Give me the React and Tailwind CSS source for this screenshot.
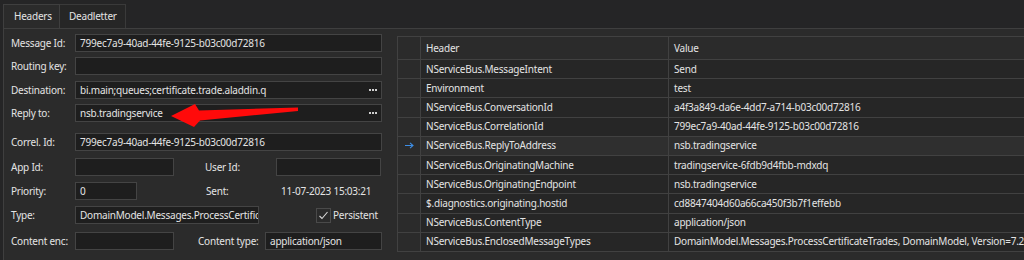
import React from "react";

const headers = [
  ["NServiceBus.MessageIntent", "Send"],
  ["Environment", "test"],
  ["NServiceBus.ConversationId", "a4f3a849-da6e-4dd7-a714-b03c00d72816"],
  ["NServiceBus.CorrelationId", "799ec7a9-40ad-44fe-9125-b03c00d72816"],
  ["NServiceBus.ReplyToAddress", "nsb.tradingservice"],
  ["NServiceBus.OriginatingMachine", "tradingservice-6fdb9d4fbb-mdxdq"],
  ["NServiceBus.OriginatingEndpoint", "nsb.tradingservice"],
  ["$.diagnostics.originating.hostid", "cd8847404d60a66ca450f3b7f1effebb"],
  ["NServiceBus.ContentType", "application/json"],
  [
    "NServiceBus.EnclosedMessageTypes",
    "DomainModel.Messages.ProcessCertificateTrades, DomainModel, Version=7.2.0.0, Culture=neutral, PublicKeyToken=null",
  ],
];

function Field({ value, className = "", dots }) {
  return (
    <div
      className={`relative flex items-center h-[18px] shrink-0 bg-[#1e1e1e] border border-[#444444] pl-[4px] overflow-hidden whitespace-nowrap ${className}`}
    >
      <span>{value}</span>
      {dots && (
        <span className="absolute right-[4px] top-[1px] flex gap-[1px] items-center h-[14px] bg-[#1e1e1e] pl-[2px]">
          <span className="w-[2px] h-[2px] bg-[#cfcfcf]"></span>
          <span className="w-[2px] h-[2px] bg-[#cfcfcf]"></span>
          <span className="w-[2px] h-[2px] bg-[#cfcfcf]"></span>
        </span>
      )}
    </div>
  );
}

function Label({ children, className = "w-[64px]" }) {
  return <div className={`shrink-0 whitespace-nowrap ${className}`}>{children}</div>;
}

export default function App() {
  return (
    <div
      className="relative w-[1024px] h-[260px] overflow-hidden bg-[#252526] text-[#e4e4e4] text-[10px] tracking-[-0.22px]"
      style={{ fontFamily: '"Noto Sans", "Open Sans", sans-serif' }}
    >
      {/* tabs */}
      <div className="flex items-end h-[28px] pl-[3px]">
        <div className="flex items-center h-[24px] w-[57px] pl-[10px] bg-[#2b2b2b] border border-b-0 border-[#3f3f3f]">
          Headers
        </div>
        <div className="flex items-center h-[24px] w-[66px] pl-[9px] bg-[#262626] border border-l-0 border-b-0 border-[#3a3a3a]">
          Deadletter
        </div>
      </div>

      {/* panel */}
      <div className="flex ml-[3px] h-[232px] bg-[#2b2b2b] border-l border-t border-[#3f3f3f]">
        {/* form */}
        <div className="flex flex-col w-[393px] shrink-0 pl-[7px] pt-[5px]">
          <div className="flex items-center">
            <Label>Message Id:</Label>
            <Field value="799ec7a9-40ad-44fe-9125-b03c00d72816" className="w-[307px]" />
          </div>
          <div className="flex items-center mt-[5px]">
            <Label>Routing key:</Label>
            <Field value="" className="w-[307px]" />
          </div>
          <div className="flex items-center mt-[6px]">
            <Label>Destination:</Label>
            <Field value="bi.main;queues;certificate.trade.aladdin.q" className="w-[307px]" dots />
          </div>
          <div className="flex items-center mt-[5px]">
            <Label>Reply to:</Label>
            <Field value="nsb.tradingservice" className="w-[307px]" dots />
          </div>
          <div className="flex items-center mt-[11px]">
            <Label>Correl. Id:</Label>
            <Field value="799ec7a9-40ad-44fe-9125-b03c00d72816" className="w-[307px]" />
          </div>
          <div className="flex items-center mt-[7px]">
            <Label>App Id:</Label>
            <Field value="" className="w-[99px]" />
            <Label className="w-[71px] ml-[31px]">User Id:</Label>
            <Field value="" className="w-[105px]" />
          </div>
          <div className="flex items-center mt-[6px]">
            <Label>Priority:</Label>
            <Field value="0" className="w-[62px]" />
            <Label className="w-[75px] ml-[69px]">Sent:</Label>
            <div className="whitespace-nowrap">11-07-2023 15:03:21</div>
          </div>
          <div className="flex items-center mt-[6px]">
            <Label>Type:</Label>
            <Field value="DomainModel.Messages.ProcessCertificateTrades" className="w-[184px]" />
            <div className="ml-[57px] w-[15px] h-[15px] flex items-center justify-center border border-[#4a4a4a] bg-[#2b2b2b]">
              <svg width="11" height="11" viewBox="0 0 11 11">
                <polyline points="1.5,6 4,8.5 9.5,2" fill="none" stroke="#d8d8d8" strokeWidth="1.1" />
              </svg>
            </div>
            <div className="ml-[2px]">Persistent</div>
          </div>
          <div className="flex items-center mt-[8px]">
            <Label>Content enc:</Label>
            <Field value="" className="w-[99px]" />
            <Label className="w-[67px] ml-[24px]">Content type:</Label>
            <Field value="application/json" className="w-[117px]" />
          </div>
        </div>

        {/* headers grid */}
        <div className="flex-1 mt-[7px] h-[216px] border-l border-t border-[#414141] overflow-hidden">
          <div className="grid grid-cols-[23px_248px_1fr] h-[23px] bg-[#2b2b2b] border-b border-[#414141]">
            <div className="border-r border-[#414141]"></div>
            <div className="flex items-center pl-[5px] border-r border-[#414141]">Header</div>
            <div className="flex items-center pl-[5px]">Value</div>
          </div>
          {headers.map(([k, v], i) => {
            const selected = i === 4;
            return (
              <div
                key={k}
                className={`grid grid-cols-[23px_248px_1fr] h-[19.2px] border-b border-[#414141] ${
                  selected ? "bg-[#2f2f2f]" : "bg-[#262626]"
                }`}
              >
                <div className="flex items-center justify-center bg-[#2b2b2b] border-r border-[#414141]">
                  {selected && (
                    <svg width="9" height="7" viewBox="0 0 9 7">
                      <path d="M0 3.5H8M5 0.8L8 3.5L5 6.2" fill="none" stroke="#3d8ee6" strokeWidth="1.1" />
                    </svg>
                  )}
                </div>
                <div className="flex items-center pl-[5px] border-r border-[#414141] whitespace-nowrap overflow-hidden">
                  {k}
                </div>
                <div className="flex items-center pl-[5px] whitespace-nowrap overflow-hidden">{v}</div>
              </div>
            );
          })}
        </div>
      </div>

      {/* red annotation arrow */}
      <svg className="absolute left-0 top-0 pointer-events-none" width="1024" height="260">
        <polygon
          points="171,116 195,104 199,110.5 298,107.5 298,111 200,120.5 194,127"
          fill="#ff0a0a"
        />
      </svg>
    </div>
  );
}
